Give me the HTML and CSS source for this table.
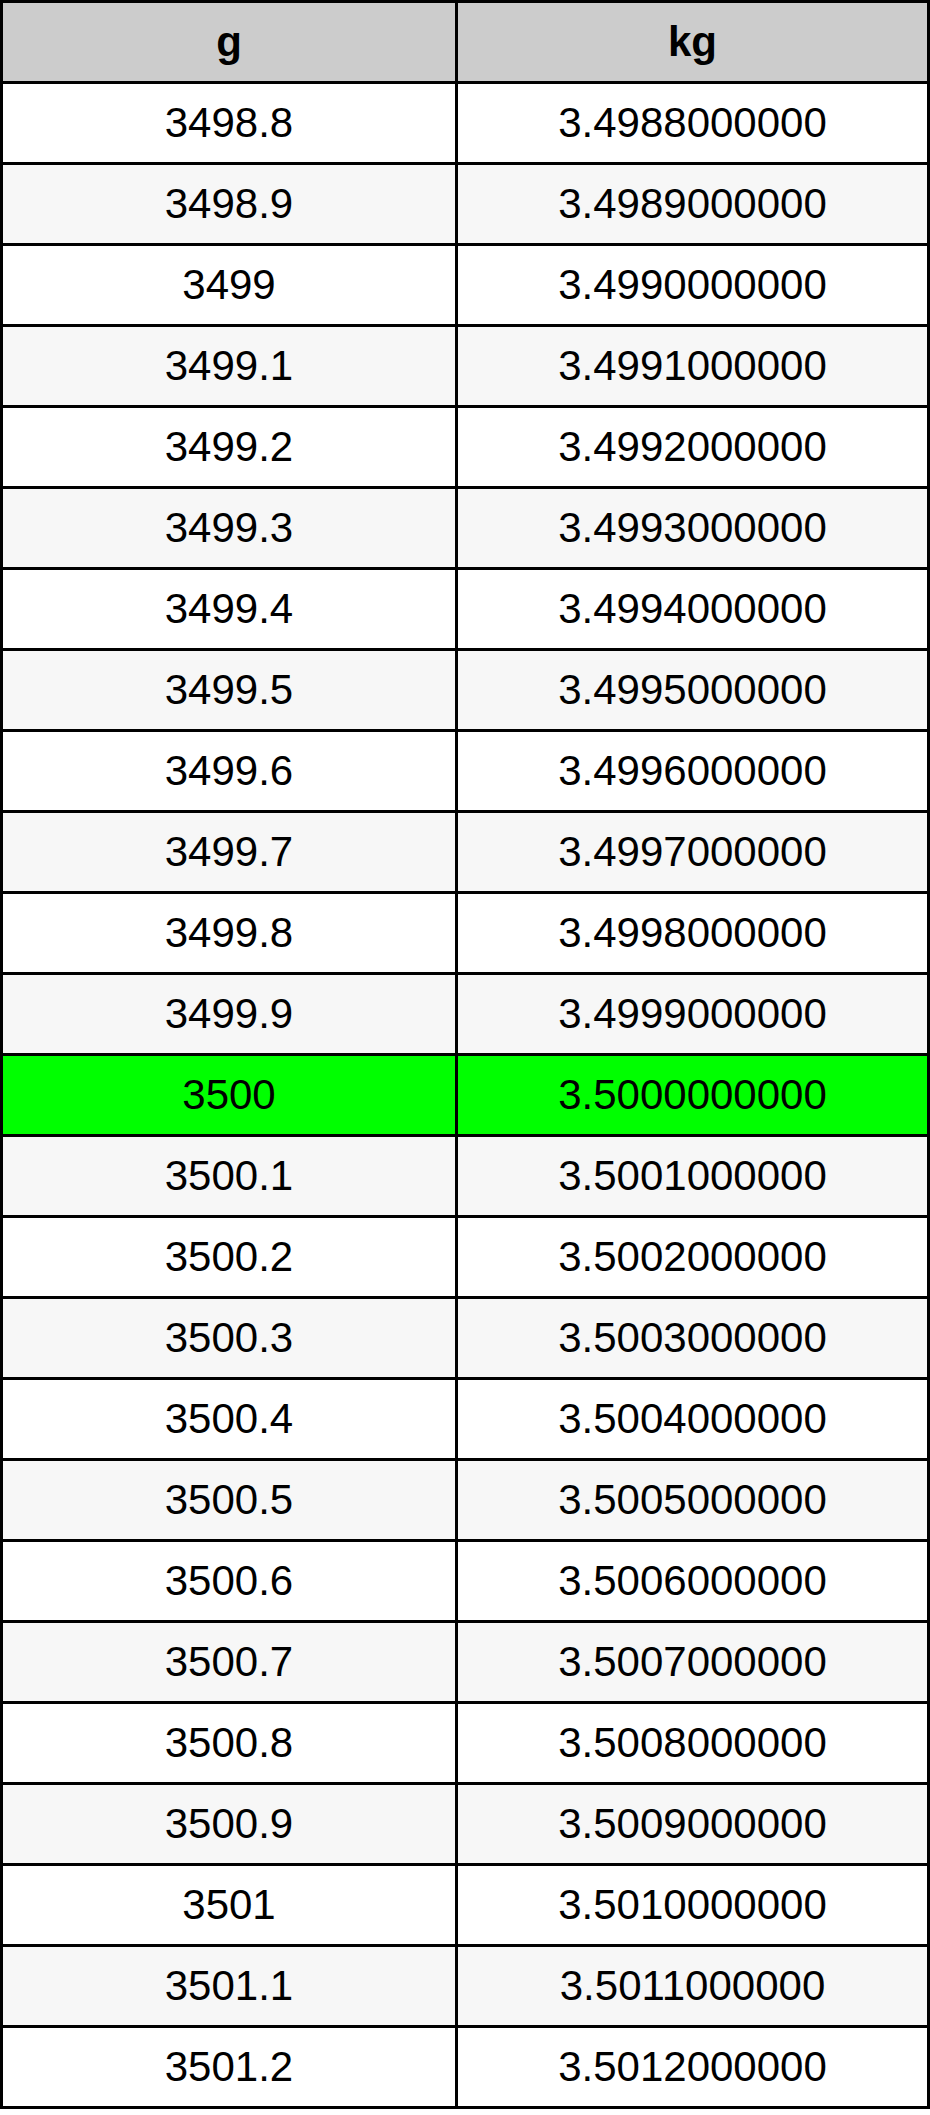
FILE: index.html
```html
<!DOCTYPE html>
<html>
<head>
<meta charset="utf-8">
<title>g to kg</title>
<link rel="stylesheet" href="styles.css">
</head>
<body>
<table class="conv">
<colgroup><col class="c-g"><col class="c-kg"></colgroup>
<thead>
<tr><th>g</th><th>kg</th></tr>
</thead>
<tbody>
<tr><td>3498.8</td><td>3.4988000000</td></tr>
<tr class="alt"><td>3498.9</td><td>3.4989000000</td></tr>
<tr><td>3499</td><td>3.4990000000</td></tr>
<tr class="alt"><td>3499.1</td><td>3.4991000000</td></tr>
<tr><td>3499.2</td><td>3.4992000000</td></tr>
<tr class="alt"><td>3499.3</td><td>3.4993000000</td></tr>
<tr><td>3499.4</td><td>3.4994000000</td></tr>
<tr class="alt"><td>3499.5</td><td>3.4995000000</td></tr>
<tr><td>3499.6</td><td>3.4996000000</td></tr>
<tr class="alt"><td>3499.7</td><td>3.4997000000</td></tr>
<tr><td>3499.8</td><td>3.4998000000</td></tr>
<tr class="alt"><td>3499.9</td><td>3.4999000000</td></tr>
<tr class="hl"><td>3500</td><td>3.5000000000</td></tr>
<tr class="alt"><td>3500.1</td><td>3.5001000000</td></tr>
<tr><td>3500.2</td><td>3.5002000000</td></tr>
<tr class="alt"><td>3500.3</td><td>3.5003000000</td></tr>
<tr><td>3500.4</td><td>3.5004000000</td></tr>
<tr class="alt"><td>3500.5</td><td>3.5005000000</td></tr>
<tr><td>3500.6</td><td>3.5006000000</td></tr>
<tr class="alt"><td>3500.7</td><td>3.5007000000</td></tr>
<tr><td>3500.8</td><td>3.5008000000</td></tr>
<tr class="alt"><td>3500.9</td><td>3.5009000000</td></tr>
<tr><td>3501</td><td>3.5010000000</td></tr>
<tr class="alt"><td>3501.1</td><td>3.5011000000</td></tr>
<tr><td>3501.2</td><td>3.5012000000</td></tr>
</tbody>
</table>
</body>
</html>
```

FILE: styles.css
```css
html, body {
  margin: 0;
  padding: 0;
  background: #ffffff;
}

.conv {
  width: 930px;
  table-layout: fixed;
  border-collapse: separate;
  border-spacing: 3px;
  background: #000000;
  font-family: "Liberation Sans", Arial, sans-serif;
  font-size: 42px;
  color: #000000;
}

.c-g { width: 452px; }
.c-kg { width: 469px; }

.conv th,
.conv td {
  height: 78px;
  padding: 0;
  text-align: center;
  vertical-align: middle;
  background: #ffffff;
  line-height: 1;
}

.conv th {
  background: #cccccc;
  font-weight: bold;
}

.conv tr.alt td {
  background: #f7f7f7;
}

.conv tr.hl td {
  background: #00ff00;
}
```
